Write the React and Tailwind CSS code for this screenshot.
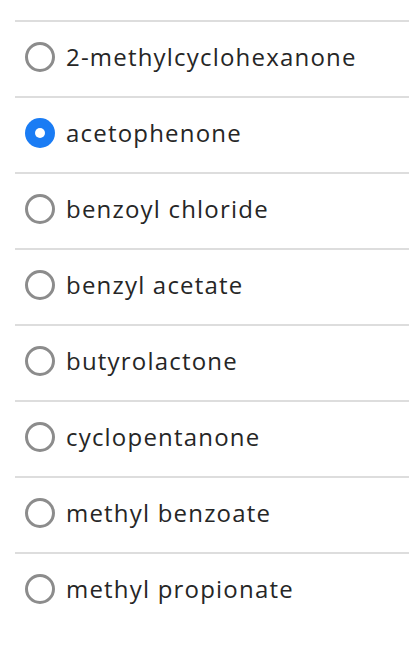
const options = [
  "2-methylcyclohexanone",
  "acetophenone",
  "benzoyl chloride",
  "benzyl acetate",
  "butyrolactone",
  "cyclopentanone",
  "methyl benzoate",
  "methyl propionate",
];

function Radio({ checked }) {
  if (checked) {
    return (
      <span className="w-[30px] h-[30px] rounded-full bg-[#1a7cf4] flex items-center justify-center shrink-0">
        <span className="w-[10px] h-[10px] rounded-full bg-white" />
      </span>
    );
  }
  return (
    <span className="w-[30px] h-[30px] rounded-full border-[3px] border-[#8c8c8c] bg-white shrink-0" />
  );
}

export default function App() {
  const selected = "acetophenone";

  return (
    <div className="w-[409px] h-[649px] bg-white pt-[20px] pl-[15px] font-['Open_Sans',sans-serif]">
      {options.map((opt) => (
        <label
          key={opt}
          className="h-[76px] border-t-2 border-[#dddddd] flex items-center pl-[10px] pb-[4px] gap-[11px] cursor-pointer"
        >
          <Radio checked={opt === selected} />
          <span className="text-[24px] text-[#262626] tracking-[1.2px]">{opt}</span>
        </label>
      ))}
    </div>
  );
}
